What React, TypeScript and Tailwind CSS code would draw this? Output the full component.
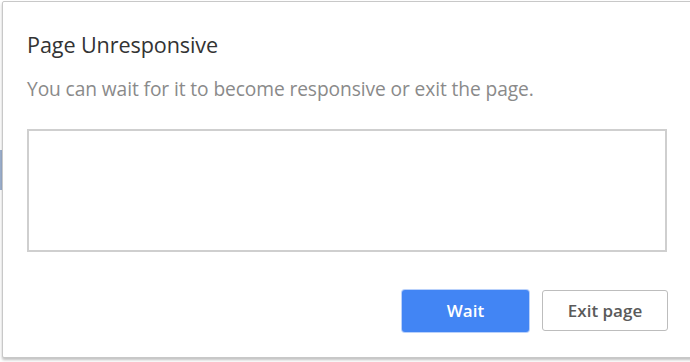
export default function App() {
  return (
    <div
      className="relative w-[690px] h-[362px] overflow-hidden bg-white"
      style={{ fontFamily: '"Open Sans", "Noto Sans", sans-serif' }}
    >
      <div className="absolute left-0 top-[150px] w-[2px] h-[40px] bg-[#9fb3d1]" />
      <div className="absolute left-[2px] top-[1px] w-[720px] h-[357px] bg-white border border-[#c8c8c8] rounded-[2px] shadow-[0_2px_3px_rgba(0,0,0,0.25)] flex flex-col">
        <div className="pl-[24px] pt-[29px] w-[665px]">
          <div className="text-[21.6px] leading-[28px] text-[#333333] tracking-[-0.1px]">Page Unresponsive</div>
          <div className="mt-[17px] text-[19.2px] leading-[26px] text-[#8a8a8a] tracking-[-0.1px]">
            You can wait for it to become responsive or exit the page.
          </div>
          <div className="mt-[27px] h-[123px] w-[640px] border-2 border-[#cfcfcf]" />
          <div className="mt-[37px] flex justify-end gap-[13px]">
            <button className="w-[127px] h-[42px] mt-[1px] rounded-[3px] bg-[#4285f4] ring-1 ring-[#b9d1fb] text-white text-[17px] font-semibold">
              Wait
            </button>
            <button className="w-[126px] h-[41px] mt-[1px] rounded-[3px] bg-white border border-[#bdbdbd] text-[#5a5a5a] text-[17px] font-semibold">
              Exit page
            </button>
          </div>
        </div>
      </div>
    </div>
  );
}
